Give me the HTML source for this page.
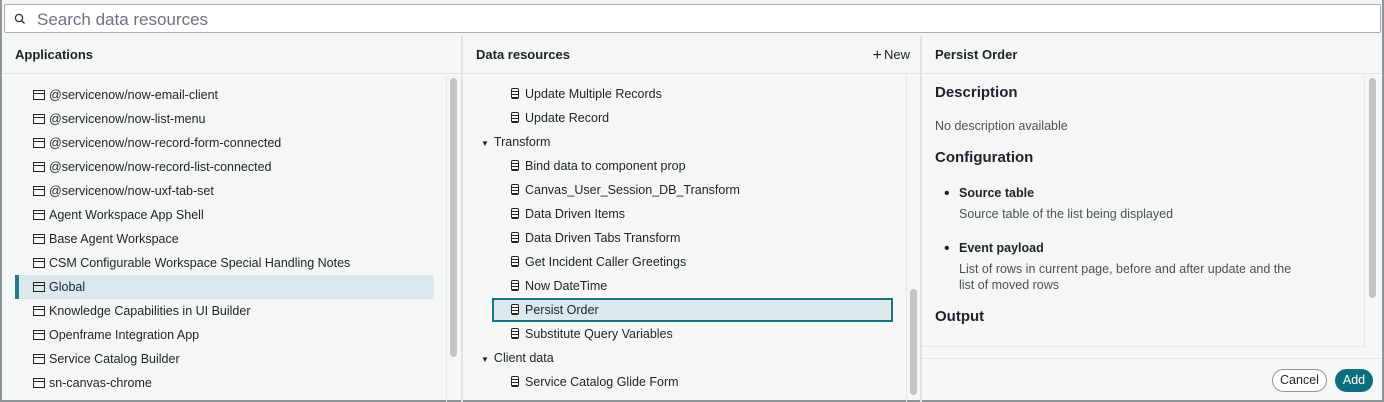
<!DOCTYPE html>
<html><head><meta charset="utf-8"><style>
*{box-sizing:border-box;margin:0;padding:0}
body{width:1384px;height:402px;overflow:hidden;background:#f5f7f6;font-family:"Liberation Sans",sans-serif;color:#1d2327;position:relative}
.frame{position:absolute;left:0;top:0;width:1384px;height:402px;border:2px solid #8e9599;border-top:none}
.search{position:absolute;left:4px;top:4px;width:1377px;height:29px;background:#fff;border:1px solid #a7adb0;border-radius:2px}
.search span{position:absolute;left:32px;top:5px;font-size:17px;color:#6b7478}
.hdr{position:absolute;top:36px;height:38px;border-bottom:1px solid #dfe3e3;font-size:13px;font-weight:bold;padding:11px 0 0 13px}
.vline{position:absolute;top:36px;width:2px;height:366px;background:#dfe3e3}
.item{position:absolute;font-size:12.5px;height:24px;line-height:24px;white-space:nowrap}
.ic{display:inline-block;width:12px;height:10px;border:1.3px solid #222;vertical-align:-1px;margin-right:4px;position:relative}
.ic:after{content:"";position:absolute;left:0;right:0;top:2px;border-top:1.3px solid #222}
.db{display:inline-block;width:8px;height:11px;border:1.3px solid #222;border-radius:2px;vertical-align:-1px;margin-right:6px;background:repeating-linear-gradient(#fff 0 2px,#222 2px 3px)}
.sb{position:absolute;width:7px;background:#c2c4c5;border-radius:4px}
h3{position:absolute;left:935px;font-size:15px;font-weight:bold}
.t{position:absolute;font-size:12.5px;color:#4a5256}
</style></head><body>
<div class="frame"></div>
<div class="search"><svg style="position:absolute;left:9px;top:8px" width="12" height="12" viewBox="0 0 12 12"><circle cx="5" cy="5" r="3.6" fill="none" stroke="#333" stroke-width="1.3"/><line x1="7.6" y1="7.6" x2="10.5" y2="10.5" stroke="#333" stroke-width="1.3"/></svg><span>Search data resources</span></div>
<div class="hdr" style="left:2px;width:459px">Applications</div>
<div class="hdr" style="left:463px;width:457px">Data resources<span style="position:absolute;right:10px;top:10px;font-weight:normal"><span style="font-size:16px;position:relative;top:1px;margin-right:2px">+</span>New</span></div>
<div class="hdr" style="left:922px;width:460px">Persist Order</div>
<div class="vline" style="left:461px"></div>
<div class="vline" style="left:920px"></div>
<div class="vline" style="left:446px;top:75px;width:1px;height:327px;background:#e4e7e7"></div>
<div class="vline" style="left:906px;top:75px;width:1px;height:327px;background:#e4e7e7"></div>
<div style="position:absolute;left:16px;top:275px;width:418px;height:24px;background:#dbe9ed"></div>
<div style="position:absolute;left:15px;top:275px;width:4px;height:24px;background:#1c7c88"></div>
<div style="position:absolute;left:492px;top:298px;width:401px;height:24px;background:#dbe9ed;border:2px solid #177583"></div>
<div class="sb" style="left:450px;top:78px;height:279px"></div>
<div class="sb" style="left:910px;top:289px;height:106px"></div>
<div class="sb" style="left:1369px;top:78px;height:220px"></div>
<div style="position:absolute;left:922px;top:74px;width:443px;height:273px;border-right:1px solid #e4e7e7;border-bottom:1px solid #e4e7e7"></div>
<div style="position:absolute;left:922px;top:358px;width:460px;border-top:1px solid #e4e7e7"></div>

<div class="item" style="left:33px;top:83px"><i class="ic"></i>@servicenow/now-email-client</div>
<div class="item" style="left:33px;top:107px"><i class="ic"></i>@servicenow/now-list-menu</div>
<div class="item" style="left:33px;top:131px"><i class="ic"></i>@servicenow/now-record-form-connected</div>
<div class="item" style="left:33px;top:155px"><i class="ic"></i>@servicenow/now-record-list-connected</div>
<div class="item" style="left:33px;top:179px"><i class="ic"></i>@servicenow/now-uxf-tab-set</div>
<div class="item" style="left:33px;top:203px"><i class="ic"></i>Agent Workspace App Shell</div>
<div class="item" style="left:33px;top:227px"><i class="ic"></i>Base Agent Workspace</div>
<div class="item" style="left:33px;top:251px"><i class="ic"></i>CSM Configurable Workspace Special Handling Notes</div>
<div class="item" style="left:33px;top:275px"><i class="ic"></i>Global</div>
<div class="item" style="left:33px;top:299px"><i class="ic"></i>Knowledge Capabilities in UI Builder</div>
<div class="item" style="left:33px;top:323px"><i class="ic"></i>Openframe Integration App</div>
<div class="item" style="left:33px;top:347px"><i class="ic"></i>Service Catalog Builder</div>
<div class="item" style="left:33px;top:371px"><i class="ic"></i>sn-canvas-chrome</div>

<div class="item" style="left:511px;top:82px"><i class="db"></i>Update Multiple Records</div>
<div class="item" style="left:511px;top:106px"><i class="db"></i>Update Record</div>
<div class="item" style="left:481px;top:130px"><span style="font-size:8px;margin-right:5px">▼</span>Transform</div>
<div class="item" style="left:511px;top:154px"><i class="db"></i>Bind data to component prop</div>
<div class="item" style="left:511px;top:178px"><i class="db"></i>Canvas_User_Session_DB_Transform</div>
<div class="item" style="left:511px;top:202px"><i class="db"></i>Data Driven Items</div>
<div class="item" style="left:511px;top:226px"><i class="db"></i>Data Driven Tabs Transform</div>
<div class="item" style="left:511px;top:250px"><i class="db"></i>Get Incident Caller Greetings</div>
<div class="item" style="left:511px;top:274px"><i class="db"></i>Now DateTime</div>
<div class="item" style="left:511px;top:298px"><i class="db"></i>Persist Order</div>
<div class="item" style="left:511px;top:322px"><i class="db"></i>Substitute Query Variables</div>
<div class="item" style="left:481px;top:346px"><span style="font-size:8px;margin-right:5px">▼</span>Client data</div>
<div class="item" style="left:511px;top:370px"><i class="db"></i>Service Catalog Glide Form</div>

<h3 style="top:84px">Description</h3>
<div class="t" style="left:935px;top:119px">No description available</div>
<h3 style="top:149px">Configuration</h3>
<div style="position:absolute;left:944px;top:185px;font-size:16px">•</div>
<div class="t" style="left:959px;top:186px;font-weight:bold;color:#1d2327">Source table</div>
<div class="t" style="left:959px;top:207px">Source table of the list being displayed</div>
<div style="position:absolute;left:944px;top:240px;font-size:16px">•</div>
<div class="t" style="left:959px;top:241px;font-weight:bold;color:#1d2327">Event payload</div>
<div class="t" style="left:959px;top:261px;line-height:16px;width:360px">List of rows in current page, before and after update and the<br>list of moved rows</div>
<h3 style="top:308px">Output</h3>

<div style="position:absolute;left:1272px;top:369px;width:55px;height:23px;border:1px solid #8e9599;border-radius:12px;font-size:12.5px;text-align:center;line-height:21px;background:#fff">Cancel</div>
<div style="position:absolute;left:1335px;top:369px;width:38px;height:23px;background:#0e6e7e;border-radius:12px;font-size:12.5px;color:#fff;text-align:center;line-height:23px">Add</div>
</body></html>
